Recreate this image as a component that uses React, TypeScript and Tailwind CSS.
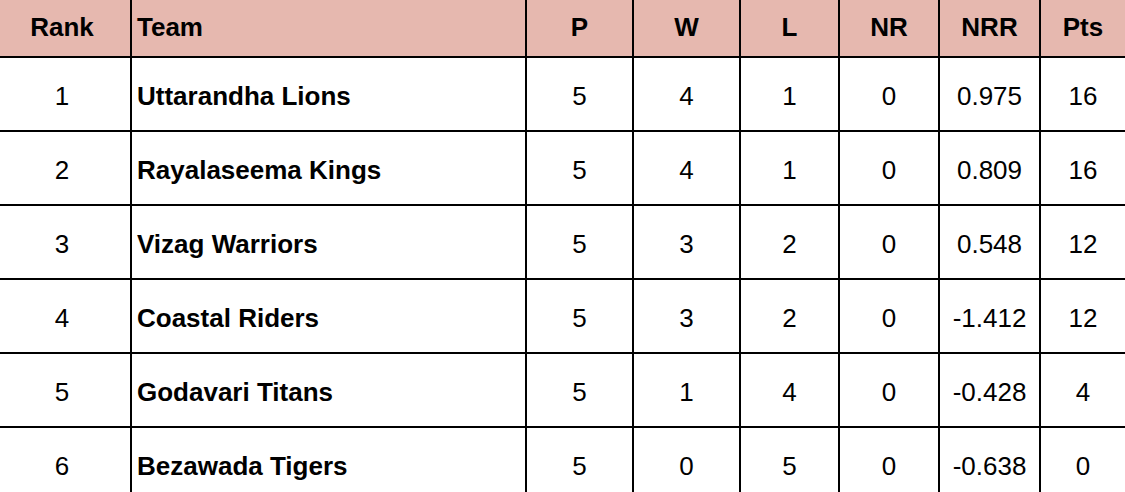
import React from 'react'

const rows = [
  { rank: 1, team: 'Uttarandha Lions', p: 5, w: 4, l: 1, nr: 0, nrr: '0.975', pts: 16 },
  { rank: 2, team: 'Rayalaseema Kings', p: 5, w: 4, l: 1, nr: 0, nrr: '0.809', pts: 16 },
  { rank: 3, team: 'Vizag Warriors', p: 5, w: 3, l: 2, nr: 0, nrr: '0.548', pts: 12 },
  { rank: 4, team: 'Coastal Riders', p: 5, w: 3, l: 2, nr: 0, nrr: '-1.412', pts: 12 },
  { rank: 5, team: 'Godavari Titans', p: 5, w: 1, l: 4, nr: 0, nrr: '-0.428', pts: 4 },
  { rank: 6, team: 'Bezawada Tigers', p: 5, w: 0, l: 5, nr: 0, nrr: '-0.638', pts: 0 },
]

const grid = 'grid grid-cols-[132px_395px_107px_107px_99px_100px_101px_1fr]'

function Cell({
  children,
  left,
  last,
  head,
  first,
}: {
  children: React.ReactNode
  left?: boolean
  last?: boolean
  head?: boolean
  first?: boolean
}) {
  return (
    <div
      className={`flex items-center border-b-2 border-black ${last ? '' : 'border-r-2'} ${
        left ? 'justify-start pl-[5px]' : 'justify-center'
      } ${first ? 'pr-[6px]' : ''} ${head ? 'h-[58px] pb-[1px] font-bold' : 'h-[74px] pt-[5px]'}`}
    >
      {children}
    </div>
  )
}

export default function App() {
  return (
    <div className="w-[1125px] h-[492px] overflow-hidden bg-white text-[26px] text-black font-['Liberation_Sans',Arial,sans-serif]">
      <div className={`${grid} bg-[#e6b8af]`}>
        <Cell head first>Rank</Cell>
        <Cell head left>Team</Cell>
        <Cell head>P</Cell>
        <Cell head>W</Cell>
        <Cell head>L</Cell>
        <Cell head>NR</Cell>
        <Cell head>NRR</Cell>
        <Cell head last>Pts</Cell>
      </div>
      {rows.map((r) => (
        <div key={r.rank} className={grid}>
          <Cell first>{r.rank}</Cell>
          <Cell left>
            <span className="font-bold">{r.team}</span>
          </Cell>
          <Cell>{r.p}</Cell>
          <Cell>{r.w}</Cell>
          <Cell>{r.l}</Cell>
          <Cell>{r.nr}</Cell>
          <Cell>{r.nrr}</Cell>
          <Cell last>{r.pts}</Cell>
        </div>
      ))}
    </div>
  )
}
